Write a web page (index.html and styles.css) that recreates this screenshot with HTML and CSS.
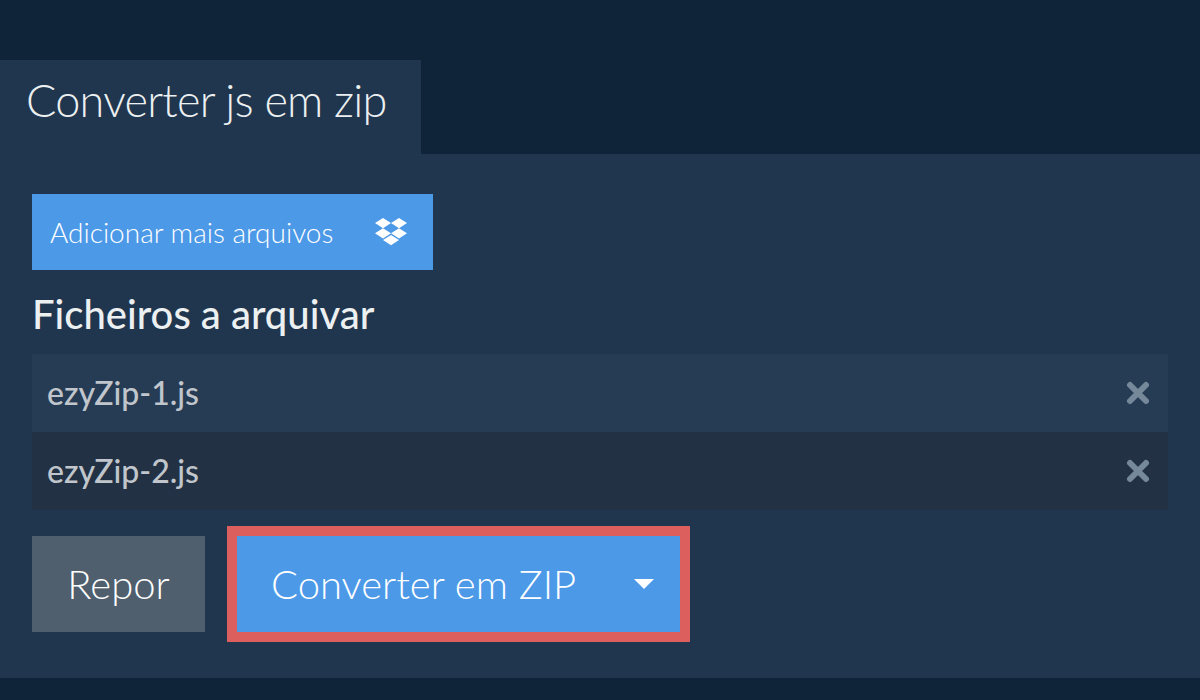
FILE: index.html
```html
<!DOCTYPE html>
<html lang="pt">
<head>
    <meta charset="UTF-8">
    <meta name="viewport" content="width=device-width, initial-scale=1.0">
    <title>Converter js em zip</title>
    <link rel="stylesheet" href="styles.css">
</head>
<body>
    <div class="tab">Converter js em zip</div>
    <div class="panel">
        <button class="btn-add" type="button">
            <span>Adicionar mais arquivos</span>
            <svg class="dropbox" viewBox="0 0 32 29" width="32" height="29">
                <path fill="#fff" d="M8 0 0 5.1l8 5.1 8-5.1zM24 0l-8 5.1 8 5.1 8-5.1zM0 15.3l8 5.1 8-5.1-8-5.1zM24 10.2l-8 5.1 8 5.1 8-5.1zM8 22.1l8 5.1 8-5.1-8-5.1z"/>
            </svg>
        </button>
        <h2>Ficheiros a arquivar</h2>
        <div class="file-list">
            <div class="file-row">
                <span>ezyZip-1.js</span>
                <svg class="remove" viewBox="0 0 24 24" width="24" height="24">
                    <path d="M4 4 20 20M20 4 4 20"/>
                </svg>
            </div>
            <div class="file-row">
                <span>ezyZip-2.js</span>
                <svg class="remove" viewBox="0 0 24 24" width="24" height="24">
                    <path d="M4 4 20 20M20 4 4 20"/>
                </svg>
            </div>
        </div>
        <div class="actions">
            <button class="btn-reset" type="button">Repor</button>
            <div class="highlight">
                <button class="btn-convert" type="button">
                    <span>Converter em ZIP</span>
                    <i class="caret"></i>
                </button>
            </div>
        </div>
    </div>
</body>
</html>
```

FILE: styles.css
```css
* {
    box-sizing: border-box;
}
html, body {
    height: 100%;
}
body {
    margin: 0;
    padding-top: 60px;
    background: #0f2439;
    font-family: Lato, "Open Sans", sans-serif;
    overflow: hidden;
}
button {
    font-family: inherit;
    border: none;
    color: #fff;
    cursor: pointer;
}
.tab {
    width: 421px;
    height: 94px;
    padding-left: 26px;
    background: #20364f;
    color: #ecf0f1;
    font-size: 45px;
    font-weight: 300;
    letter-spacing: -0.75px;
    line-height: 81px;
}
.panel {
    height: 524px;
    padding: 40px 32px 0;
    background: #20364f;
}
.btn-add {
    display: flex;
    align-items: center;
    justify-content: space-between;
    width: 401px;
    height: 76px;
    padding: 0 26px 0 18px;
    background: #4c99e8;
    font-size: 28px;
    font-weight: 300;
}
h2 {
    margin: 0;
    height: 84px;
    color: #ecf0f1;
    font-size: 40px;
    font-weight: 500;
    line-height: 89px;
}
.file-row {
    display: flex;
    align-items: center;
    justify-content: space-between;
    height: 78px;
    padding: 0 18px 0 15px;
    background: #263c54;
    color: #c0c6cc;
    font-size: 32px;
    font-weight: 500;
}
.file-row span {
    margin-bottom: 2px;
}
.file-row + .file-row {
    background: #223143;
}
.remove {
    fill: none;
    stroke: #76899b;
    stroke-width: 6;
    stroke-linecap: round;
}
.actions {
    display: flex;
    align-items: flex-start;
    gap: 22px;
    margin-top: 16px;
}
.btn-reset {
    width: 173px;
    height: 96px;
    margin-top: 10px;
    background: #4f5f6e;
    font-size: 40px;
    font-weight: 300;
}
.highlight {
    border: 10px solid #dd5f5d;
}
.btn-convert {
    display: flex;
    align-items: center;
    justify-content: space-between;
    width: 443px;
    height: 96px;
    padding: 0 26px 0 34px;
    background: #4c99e8;
    font-size: 40px;
    font-weight: 300;
}
.caret {
    border-left: 10px solid transparent;
    border-right: 10px solid transparent;
    border-top: 10px solid #fff;
}
```
